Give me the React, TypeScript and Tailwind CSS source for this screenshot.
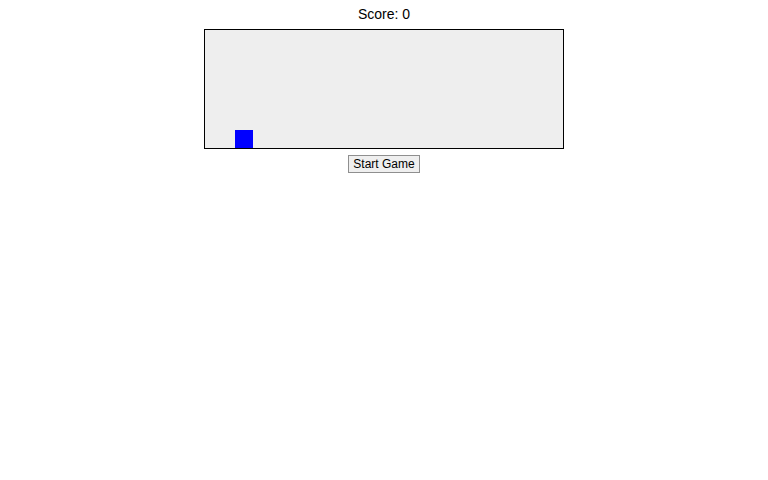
export default function App() {
  return (
    <div className="flex flex-col items-center pt-[4px] font-['Liberation_Sans',Arial,sans-serif] text-black">
      <div className="text-[14px] leading-[20px]">Score: 0</div>
      <div className="mt-[5px] flex h-[120px] w-[360px] items-end border border-black bg-[#eeeeee] pl-[30px]">
        <div className="h-[18px] w-[18px] bg-[#0000ff]" />
      </div>
      <button className="mt-[6px] border border-[#8f8f8f] bg-[#efefef] px-[4px] py-[1px] text-[12px] leading-[14px]">
        Start Game
      </button>
    </div>
  );
}
